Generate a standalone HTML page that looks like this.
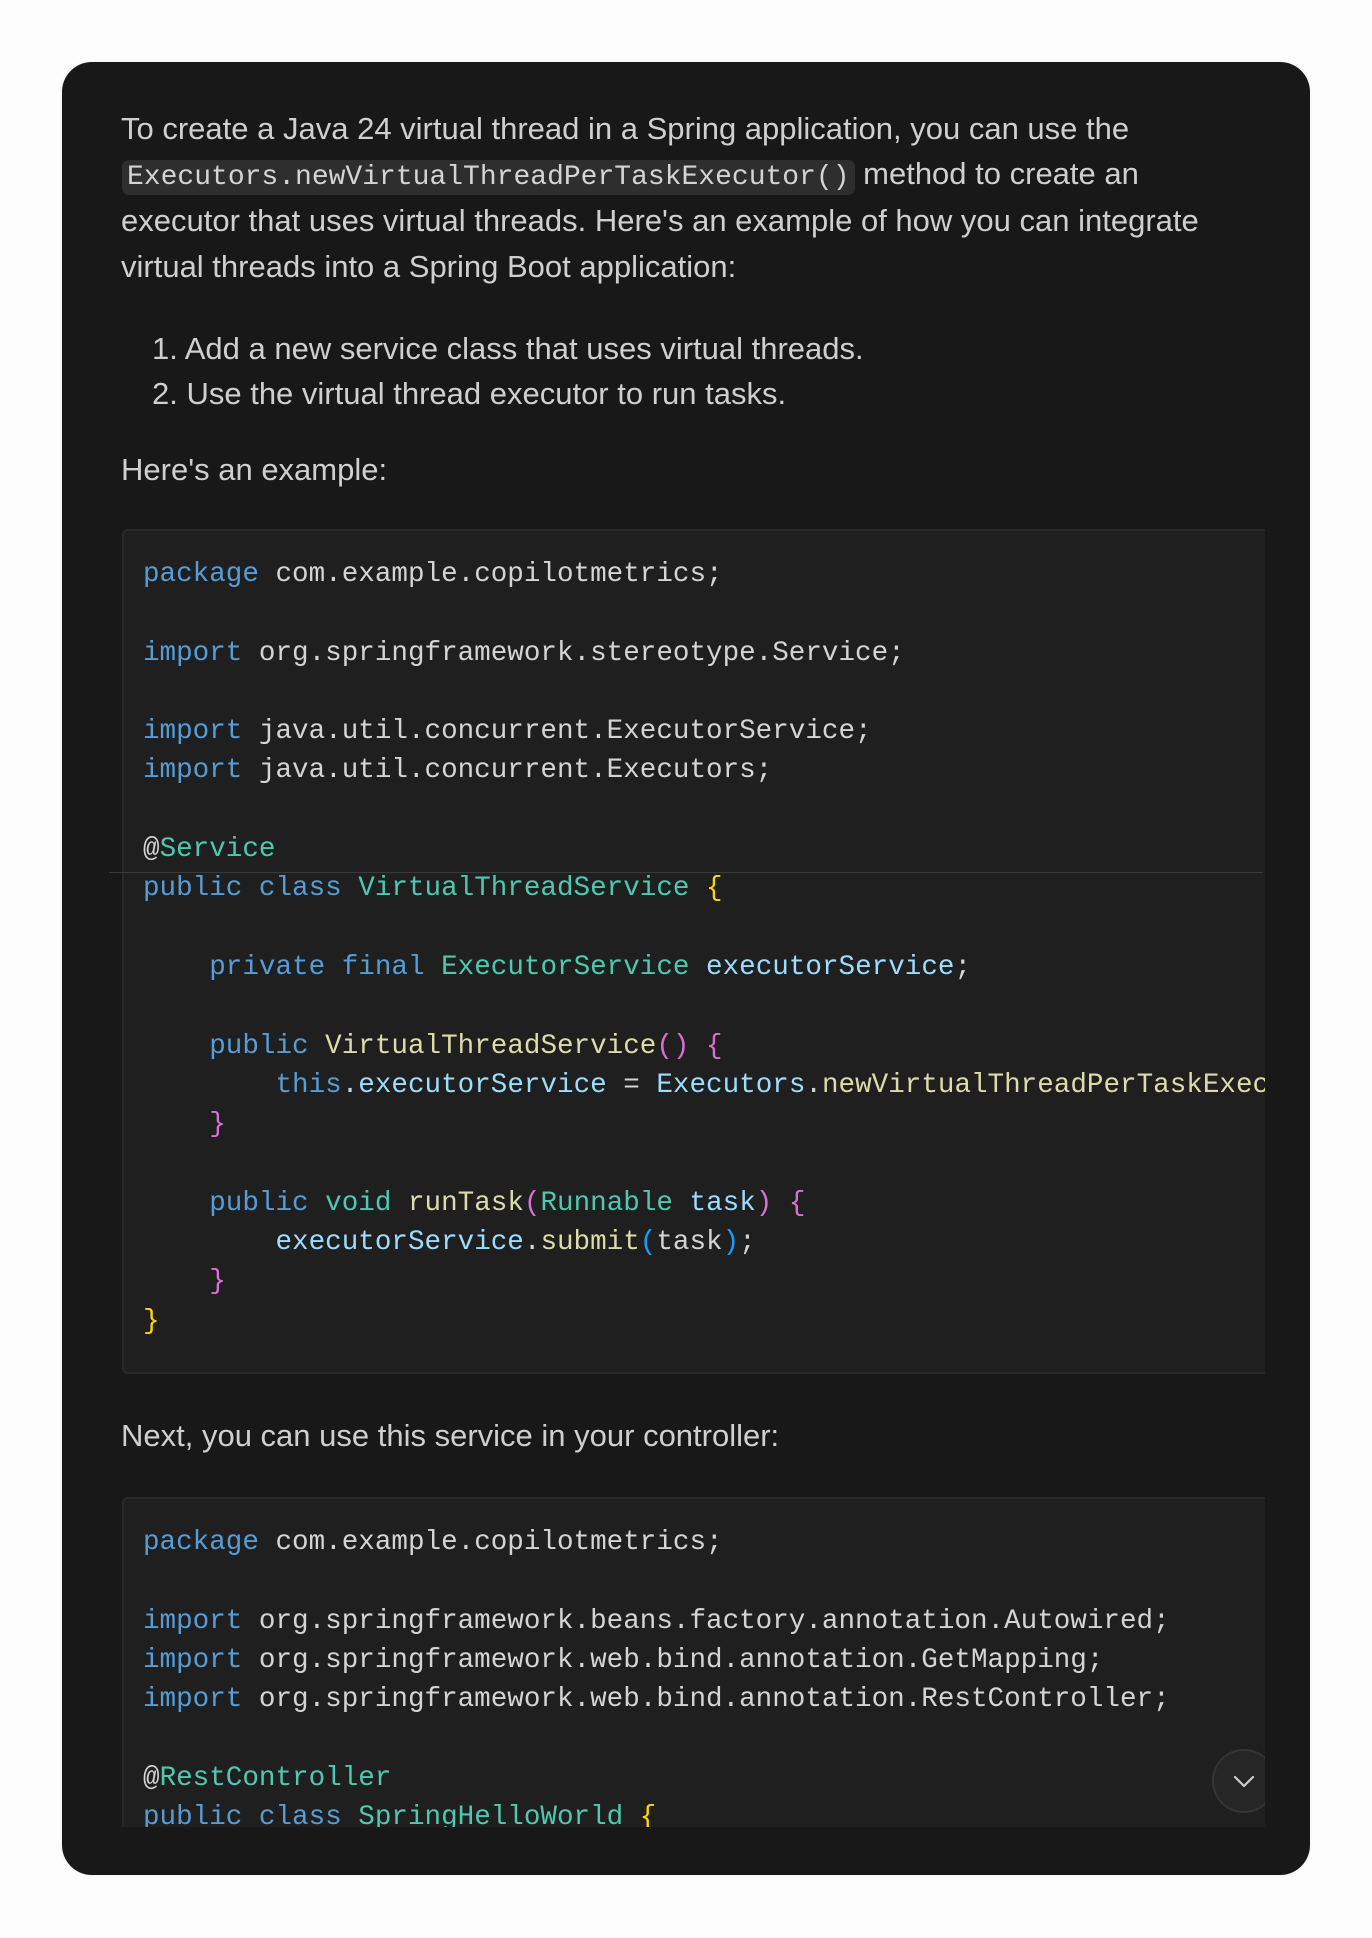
<!DOCTYPE html>
<html><head><meta charset="utf-8">
<style>
html,body{margin:0;padding:0;background:#fdfdfd;width:1372px;height:1938px;overflow:hidden;}
.card{position:absolute;left:62px;top:62px;width:1248px;height:1813px;background:#181818;border-radius:30px;overflow:hidden;box-shadow:0 0 3px rgba(0,0,0,0.08);}
.t{position:absolute;left:59px;font-family:"Liberation Sans",Arial,sans-serif;font-size:31px;color:#cfcfcf;white-space:nowrap;line-height:46px;height:46px;}
.ic{font-family:"Liberation Mono",monospace;font-size:28px;background:#2e2e2e;border-radius:7px;padding:2px 5px;color:#d4d4d4;}
.cb{position:absolute;left:60px;width:1141px;background:#1f1f1f;border:2px solid #2a2a2a;border-right:none;border-radius:6px 0 0 6px;overflow:hidden;}
.cb pre{margin:0;position:absolute;left:19px;top:24px;font-family:"Liberation Mono",monospace;font-size:27.6px;line-height:39.3px;color:#d4d4d4;white-space:pre;}
.k{color:#569cd6}.ty{color:#4ec9b0}.v{color:#9cdcfe}.f{color:#dcdcaa}.y{color:#ffd700}.p{color:#da70d6}.b{color:#179fff}
</style></head><body>
<div class="card">
  <div class="t" style="top:44px">To create a Java 24 virtual thread in a Spring application, you can use the</div>
  <div class="t" style="top:89px;left:60px"><span class="ic">Executors.newVirtualThreadPerTaskExecutor()</span> method to create an</div>
  <div class="t" style="top:136px">executor that uses virtual threads. Here's an example of how you can integrate</div>
  <div class="t" style="top:182px">virtual threads into a Spring Boot application:</div>
  <div class="t" style="top:264px;left:90px">1. Add a new service class that uses virtual threads.</div>
  <div class="t" style="top:309px;left:90px">2. Use the virtual thread executor to run tasks.</div>
  <div class="t" style="top:385px">Here's an example:</div>

  <div class="cb" style="top:467px;height:841px;">
<pre><span class="k">package</span> com.example.copilotmetrics;

<span class="k">import</span> org.springframework.stereotype.Service;

<span class="k">import</span> java.util.concurrent.ExecutorService;
<span class="k">import</span> java.util.concurrent.Executors;

@<span class="ty">Service</span>
<span class="k">public</span> <span class="k">class</span> <span class="ty">VirtualThreadService</span> <span class="y">{</span>

    <span class="k">private</span> <span class="k">final</span> <span class="ty">ExecutorService</span> <span class="v">executorService</span>;

    <span class="k">public</span> <span class="f">VirtualThreadService</span><span class="p">()</span> <span class="p">{</span>
        <span class="k">this</span>.<span class="v">executorService</span> = <span class="v">Executors</span>.<span class="f">newVirtualThreadPerTaskExecutor</span><span class="b">()</span>;
    <span class="p">}</span>

    <span class="k">public</span> <span class="ty">void</span> <span class="f">runTask</span><span class="p">(</span><span class="ty">Runnable</span> <span class="v">task</span><span class="p">)</span> <span class="p">{</span>
        <span class="v">executorService</span>.<span class="f">submit</span><span class="b">(</span>task<span class="b">)</span>;
    <span class="p">}</span>
<span class="y">}</span></pre>
  </div>
  <div style="position:absolute;left:47px;top:810px;width:1154px;height:1px;background:#3a3a3a;"></div>

  <div class="t" style="top:1351px">Next, you can use this service in your controller:</div>

  <div class="cb" style="top:1435px;height:328px;border-bottom:none;border-radius:6px 0 0 0;">
<pre><span class="k">package</span> com.example.copilotmetrics;

<span class="k">import</span> org.springframework.beans.factory.annotation.Autowired;
<span class="k">import</span> org.springframework.web.bind.annotation.GetMapping;
<span class="k">import</span> org.springframework.web.bind.annotation.RestController;

@<span class="ty">RestController</span>
<span class="k">public</span> <span class="k">class</span> <span class="ty">SpringHelloWorld</span> <span class="y">{</span></pre>
    <div style="position:absolute;left:1088px;top:250px;width:60px;height:60px;border-radius:50%;background:#262626;border:2px solid #353535;">
      <svg width="60" height="60" viewBox="0 0 60 60" style="position:absolute;left:0;top:0"><path d="M21 26 L30 35 L39 26" fill="none" stroke="#cccccc" stroke-width="2.2" stroke-linecap="round" stroke-linejoin="round"/></svg>
    </div>
  </div>
</div>
</body></html>
